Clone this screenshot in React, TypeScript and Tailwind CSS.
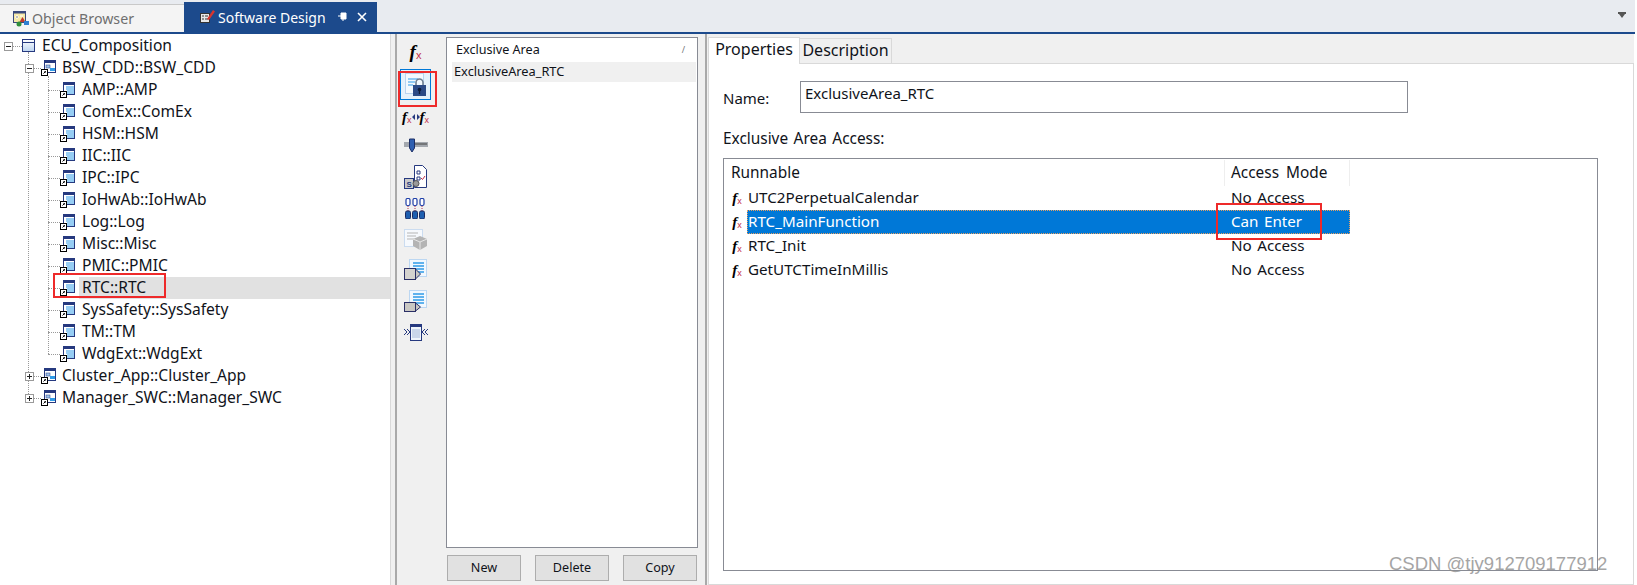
const FONT = "font-['Noto_Sans',sans-serif]";

const treeItems = [
  "AMP::AMP",
  "ComEx::ComEx",
  "HSM::HSM",
  "IIC::IIC",
  "IPC::IPC",
  "IoHwAb::IoHwAb",
  "Log::Log",
  "Misc::Misc",
  "PMIC::PMIC",
  "RTC::RTC",
  "SysSafety::SysSafety",
  "TM::TM",
  "WdgExt::WdgExt",
];

const runnables = [
  { name: "UTC2PerpetualCalendar", mode: "No Access" },
  { name: "RTC_MainFunction", mode: "Can Enter", selected: true },
  { name: "RTC_Init", mode: "No Access" },
  { name: "GetUTCTimeInMillis", mode: "No Access" },
];

function Expander({ open }: { open: boolean }) {
  return (
    <svg width="9" height="9" viewBox="0 0 9 9" className="shrink-0">
      <rect x="0.5" y="0.5" width="8" height="8" fill="#fff" stroke="#9a9a9a" />
      <path d={open ? "M2 4.5h5" : "M2 4.5h5M4.5 2v5"} stroke="#222" />
    </svg>
  );
}

function Shortcut() {
  return (
    <g>
      <rect x="0.5" y="9.5" width="6" height="6" fill="#fff" stroke="#000" />
      <path d="M2.5 13.5l2-2M3.5 11.5h1v1" stroke="#000" fill="none" />
    </g>
  );
}

function ComponentIcon() {
  return (
    <svg width="16" height="16" viewBox="0 0 16 16" className="shrink-0">
      <rect x="3.5" y="0.5" width="11" height="12" fill="#fff" stroke="#26397f" />
      <rect x="3" y="0" width="12" height="3" fill="#26397f" />
      <path d="M6 5h8M6 7h8M7 9h7M7 11h7" stroke="#2f9be8" />
      <Shortcut />
    </svg>
  );
}

function CompositionIcon() {
  return (
    <svg width="16" height="16" viewBox="0 0 16 16" className="shrink-0">
      <rect x="3.5" y="0.5" width="11" height="12" fill="#fff" stroke="#26397f" />
      <rect x="3" y="0" width="12" height="3" fill="#26397f" />
      <rect x="5" y="5" width="4" height="3" fill="#9ec3ea" stroke="#26397f" strokeWidth="0.5" />
      <rect x="9" y="8" width="5" height="3" fill="#2f9be8" />
      <Shortcut />
    </svg>
  );
}

function RootIcon() {
  return (
    <svg width="14" height="14" viewBox="0 0 14 14" className="shrink-0">
      <defs>
        <linearGradient id="rootFill" x1="0" y1="0" x2="0" y2="1">
          <stop offset="0" stopColor="#ffffff" />
          <stop offset="1" stopColor="#bcd4f0" />
        </linearGradient>
      </defs>
      <rect x="0.5" y="0.5" width="12" height="12" fill="url(#rootFill)" stroke="#26397f" />
      <path d="M1 3.5h11" stroke="#26397f" />
    </svg>
  );
}

function Fx({ small }: { small?: boolean }) {
  return (
    <span className="inline-flex items-end leading-none">
      <span className={`font-['Liberation_Serif',serif] font-bold italic ${small ? "text-[15px]" : "text-[19px]"} text-black`}>f</span>
      <span className={`font-['Liberation_Sans',sans-serif] ${small ? "text-[9px]" : "text-[11px]"} text-[#c0304a]`}>x</span>
    </span>
  );
}

function ToolIcon({ kind }: { kind: number }) {
  if (kind === 1) {
    return (
      <svg width="22" height="24" viewBox="0 0 22 24">
        <rect x="0.5" y="0.5" width="18" height="20" fill="#f4f9fe" stroke="#b9d3ef" />
        <path d="M3 6h10M3 9h7M3 12h5" stroke="#2f9be8" />
        <path d="M11 13V9.5a3.5 3.5 0 0 1 7 0V13" fill="none" stroke="#6f7f92" strokeWidth="1.6" />
        <rect x="8" y="12" width="13" height="11" fill="#2c4a86" />
        <circle cx="14.5" cy="16.5" r="1.8" fill="#0d1b3a" />
        <rect x="13.8" y="17" width="1.4" height="4" fill="#0d1b3a" />
      </svg>
    );
  }
  if (kind === 3) {
    return (
      <svg width="24" height="16" viewBox="0 0 24 16">
        <rect x="0" y="4" width="24" height="5" fill="#a4a8ae" />
        <path d="M9 6h14" stroke="#444" />
        <path d="M5.5 1h5v9l-2.5 4-2.5-4z" fill="#2f5fb0" stroke="#1d2f66" />
      </svg>
    );
  }
  if (kind === 4) {
    return (
      <svg width="24" height="24" viewBox="0 0 24 24">
        <path d="M10.5.5h8l4 4v18h-12z" fill="#fff" stroke="#26397f" />
        <path d="M13 6h3v3h-3zM13 12h3v3h-3z" fill="none" stroke="#26397f" />
        <path d="M17 13l1.5 1.5L21 11" stroke="#c0304a" fill="none" />
        <rect x="0.5" y="13.5" width="9" height="10" fill="#c9c9c9" stroke="#26397f" />
        <text x="2.5" y="22" fontSize="8" fontWeight="700" fill="#26397f" fontFamily="Liberation Sans">S</text>
        <circle cx="12" cy="18.5" r="3" fill="#9a9a9a" stroke="#555" />
      </svg>
    );
  }
  if (kind === 5) {
    return (
      <svg width="21" height="21" viewBox="0 0 21 21">
        {[0, 7, 14].map((x) => (
          <g key={x}>
            <rect x={x + 1} y="0.5" width="4" height="7" rx="1.5" fill="#fff" stroke="#1f3fa8" strokeWidth="1.2" />
            <path d={`M${x + 3} 8v5`} stroke="#b03050" strokeDasharray="1 1" />
            <rect x={x + 0.5} y="13" width="5" height="8" rx="1.5" fill="#1f5fb0" stroke="#1c2a60" />
          </g>
        ))}
      </svg>
    );
  }
  if (kind === 6) {
    return (
      <svg width="24" height="21" viewBox="0 0 24 21">
        <rect x="0.5" y="0.5" width="18" height="17" fill="#f6f9fd" stroke="#cbdcf0" />
        <path d="M3 4h11M3 7h9M3 10h7" stroke="#b5b5b5" />
        <path d="M9 10l7-3 7 3v7l-7 4-7-4z" fill="#b4b4b4" />
        <path d="M9 10l7 3 7-3M16 13v8" stroke="#e6e6e6" fill="none" />
      </svg>
    );
  }
  if (kind === 7 || kind === 8) {
    const top = kind === 7;
    return (
      <svg width="24" height="22" viewBox="0 0 24 22">
        <rect x="5.5" y="0.5" width="17" height="17" fill="#f2f8fe" stroke="#bcd7f2" />
        <path d="M9 4h11M9 7h11M9 10h11M12 13h8" stroke="#2f9be8" strokeWidth="1.4" />
        <rect x="0.5" y={top ? 9.5 : 12.5} width="11" height={top ? 11 : 9} fill={top ? "#d5d3cf" : "#c9c7c3"} stroke="#2a2f66" />
        <path d={`M11.5 ${top ? 10 : 13}l5 ${top ? 5 : 4}-5 ${top ? 5 : 4}z`} fill="#c9c7c3" stroke="#2a2f66" />
      </svg>
    );
  }
  return (
    <svg width="24" height="17" viewBox="0 0 24 17">
      <rect x="6.5" y="0.5" width="11" height="16" fill="#eef4fb" stroke="#26397f" />
      <rect x="6" y="0" width="12" height="3" fill="#26397f" />
      <rect x="8" y="5" width="8" height="9" fill="#c9d6ea" />
      <path d="M0 5l3 3-3 3M3 5l3 3-3 3M24 5l-3 3 3 3M21 5l-3 3 3 3" fill="none" stroke="#26397f" />
    </svg>
  );
}

function TreeRow({
  indent,
  label,
  icon,
  expander,
  selected,
}: {
  indent: number;
  label: string;
  icon: React.ReactNode;
  expander?: boolean;
  selected?: boolean;
}) {
  return (
    <div className="relative flex h-[22px] items-center" style={{ paddingLeft: indent }}>
      {/* tronco horizontal punteado */}
      <div
        className="absolute top-[11px] h-0 border-t border-dotted border-[#999]"
        style={{ left: indent - 12, width: 12 }}
      />
      {expander !== undefined && (
        <div className="absolute top-[7px] z-10 flex" style={{ left: indent - 16 }}>
          <Expander open={expander} />
        </div>
      )}
      {icon}
      <span
        className={`ml-[3px] flex h-[22px] flex-1 items-center pb-[1px] text-[15.6px] text-[#10131a] ${
          indent === 41 ? "pl-[2px]" : "pl-[3px]"
        } ${selected ? "bg-[#e1e1e1]" : ""}`}
      >
        {label}
      </span>
      {selected && (
        <div className="absolute left-[53px] top-[-4px] h-[25px] w-[113px] border-2 border-[#ee2a2a]" />
      )}
    </div>
  );
}

function TreePanel() {
  return (
    <div className="relative w-[391px] shrink-0 border-r border-[#d9d9d9] bg-white pt-px">
      <div className="absolute left-[28px] top-[18px] h-[346px] border-l border-dotted border-[#999]" />
      <div className="absolute left-[48px] top-[42px] h-[278px] border-l border-dotted border-[#999]" />
      <div className="relative flex h-[22px] items-center pl-[22px]">
        <div className="absolute left-[4px] top-[7px] flex">
          <Expander open />
        </div>
        <div className="absolute left-[13px] top-[11px] w-[9px] border-t border-dotted border-[#999]" />
        <RootIcon />
        <span className="ml-[6px] pb-[1px] text-[15.6px] text-[#10131a]">ECU_Composition</span>
      </div>
      <TreeRow indent={41} label="BSW_CDD::BSW_CDD" icon={<CompositionIcon />} expander />
      {treeItems.map((item) => (
        <TreeRow key={item} indent={60} label={item} icon={<ComponentIcon />} selected={item === "RTC::RTC"} />
      ))}
      <TreeRow indent={41} label="Cluster_App::Cluster_App" icon={<CompositionIcon />} expander={false} />
      <TreeRow indent={41} label="Manager_SWC::Manager_SWC" icon={<CompositionIcon />} expander={false} />
    </div>
  );
}

function Toolbar() {
  return (
    <div className="flex w-[51px] shrink-0 flex-col items-center border-l-2 border-[#a9a9a9] pr-[12px] pt-[4px]">
      <div className="flex h-[27px] items-center justify-center">
        <Fx />
      </div>
      <div className="relative mt-[4px] flex h-[31px] w-[31px] items-center justify-center border border-[#0078d7] bg-[#e5f1fb]">
        <ToolIcon kind={1} />
        <div className="absolute left-[-3px] top-[1px] h-[36px] w-[39px] border-2 border-[#ee2a2a]" />
      </div>
      <div className="mt-[4px] flex h-[26px] items-center justify-center">
        <Fx small />
        <svg width="8" height="6" viewBox="0 0 8 6">
          <path d="M3 0v6L0 3zM5 0v6l3-3z" fill="#26397f" />
        </svg>
        <Fx small />
      </div>
      <div className="mt-[6px] flex h-[20px] items-center">
        <ToolIcon kind={3} />
      </div>
      {[4, 5, 6, 7, 8, 9].map((kind) => (
        <div key={kind} className={`flex items-center justify-center ${kind === 4 ? "mt-[7px] h-[28px]" : "mt-[3px] h-[28px]"}`}>
          <ToolIcon kind={kind} />
        </div>
      ))}
    </div>
  );
}

function ListPanel() {
  const buttons = ["New", "Delete", "Copy"];
  return (
    <div className="flex w-[259px] shrink-0 flex-col pb-[4px] pt-[3px]">
      <div className="flex h-[511px] w-[252px] flex-col border border-[#888b94] bg-white">
        <div className="flex h-[24px] items-center justify-between pl-[9px] pr-[12px] text-[12.6px] text-[#10131a]">
          <span>Exclusive Area</span>
          <span className="text-[9px] text-[#777]">/</span>
        </div>
        <div className="ml-[5px] mr-px flex h-[20px] items-center bg-[#f0f0f0] pl-[2px] text-[12.8px] text-[#10131a]">
          ExclusiveArea_RTC
        </div>
      </div>
      <div className="mt-[7px] flex w-[252px] justify-between pl-px pr-px">
        {buttons.map((b) => (
          <button
            key={b}
            className="flex h-[26px] w-[74px] items-center justify-center border border-[#adadad] bg-[#e1e1e1] text-[12.6px] text-[#10131a]"
          >
            {b}
          </button>
        ))}
      </div>
    </div>
  );
}

function PropertiesPanel() {
  return (
    <div className="flex flex-1 flex-col border-l-2 border-[#a9a9a9] pl-px pt-[3px]">
      <div className="flex h-[26px] items-end text-[16px]">
        <div className="z-10 mb-[-1px] flex h-[27px] w-[92px] items-center justify-center border border-b-0 border-[#d9d9d9] bg-white pb-[4px] text-[#10131a]">
          Properties
        </div>
        <div className="flex h-[25px] w-[92px] items-center justify-center border border-l-0 border-b-0 border-[#d9d9d9] bg-[#f0f0f0] pb-[3px] text-[#10131a]">
          Description
        </div>
      </div>
      <div className="flex flex-1 flex-col border border-[#d9d9d9] bg-white pl-[14px] pt-[17px]">
        <div className="flex h-[32px] items-start">
          <span className="mt-[7px] w-[77px] text-[15px] leading-[20px] text-[#10131a]">Name:</span>
          <div className="h-[32px] w-[608px] border border-[#888b94] px-[4px] text-[15px] leading-[22px] text-[#10131a]">
            ExclusiveArea_RTC
          </div>
        </div>
        <div className="mt-[16px] h-[20px] text-[15.4px] leading-[20px] text-[#10131a] [word-spacing:1.5px]">
          Exclusive Area Access:
        </div>
        <div className="mt-[9px] h-[413px] w-[875px] border border-[#888b94] px-[1px] pt-[1px]">
          <div className="flex h-[26px] w-[625px] text-[15.4px] text-[#10131a]">
            <div className="flex w-[499px] items-center pl-[6px]">Runnable</div>
            <div className="flex w-[126px] items-center border-x border-[#eeeeee] pl-[6px] [word-spacing:3px]">
              Access Mode
            </div>
          </div>
          {runnables.map((r) => (
            <div key={r.name} className="flex h-[24px] w-[625px] items-center text-[15.2px]">
              <span className="flex w-[22px] justify-center pl-[2px]">
                <Fx small />
              </span>
              <div
                className={`flex h-[24px] flex-1 items-center pl-[1px] ${
                  r.selected
                    ? "bg-[#0078d7] text-white outline outline-1 -outline-offset-1 outline-dotted outline-[#e8a060]"
                    : "text-[#10131a]"
                }`}
              >
                <span className="flex-1 pb-[1px]">{r.name}</span>
                <span className="relative w-[119px] pb-[1px] [word-spacing:1.5px]">
                  {r.mode}
                  {r.selected && (
                    <span className="absolute left-[-15px] top-[-7px] h-[37px] w-[106px] border-2 border-[#ee2a2a]" />
                  )}
                </span>
              </div>
            </div>
          ))}
        </div>
      </div>
    </div>
  );
}

export default function App() {
  return (
    <div className={`relative flex h-[585px] w-[1637px] flex-col overflow-hidden bg-white ${FONT}`}>
      {/* Barra de pestañas */}
      <div className="flex h-[34px] w-[1635px] shrink-0 items-end border-b-2 border-[#1c4a8c] bg-[#e8ebf0]">
        <div className="flex h-[28px] w-[184px] items-center gap-[3px] whitespace-nowrap border-t border-[#c9c9c9] bg-[#f4f4f4] pl-[13px] text-[14.2px] text-[#6f6f6f]">
          <svg width="16" height="16" viewBox="0 0 16 16">
            <rect x="0.5" y="0.5" width="12" height="11" fill="#f6e9a8" stroke="#3a4a7c" />
            <rect x="0" y="0" width="13" height="2.5" fill="#3a4a7c" />
            <path d="M3 5h2v2H3zM7 5h3" stroke="#fff" />
            <path d="M9.5 6l3 5h-6z" fill="#c0392b" />
            <rect x="11" y="10" width="5" height="4" fill="#2f7fd0" />
            <circle cx="6" cy="13" r="2.5" fill="#2f8f3a" />
          </svg>
          Object Browser
        </div>
        <div className="flex h-[30px] w-[193px] items-center whitespace-nowrap bg-[#1c4a8c] pl-[16px] text-[14px] text-white">
          <svg width="16" height="16" viewBox="0 0 16 16" className="mr-[2px]">
            <rect x="0.5" y="4.5" width="9" height="9" fill="#e8e8e8" stroke="#333" />
            <path d="M2 7h2M5 7h3M2 10h2M5 10h3" stroke="#333" />
            <path d="M7 10l6-9 2 1.5-6 8.5z" fill="#d8352e" />
          </svg>
          Software Design
          <svg width="10" height="10" viewBox="0 0 10 10" className="ml-[12px]">
            <path d="M3 1h5v6H3zM0 4h3M5 7v2" stroke="#fff" fill="#fff" />
          </svg>
          <svg width="10" height="10" viewBox="0 0 10 10" className="ml-[9px]">
            <path d="M1 1l8 8M9 1l-8 8" stroke="#fff" strokeWidth="1.6" />
          </svg>
        </div>
        <div className="flex-1" />
        <svg width="8" height="6" viewBox="0 0 8 6" className="mb-[14px] mr-[9px]">
          <path d="M0 0h8v2H7L4 6 1 2H0z" fill="#555" />
        </svg>
      </div>

      {/* Cuerpo */}
      <div className="flex w-[1634px] flex-1 bg-[#f0f0f0]">
        <TreePanel />
        <div className="w-[4px] shrink-0" />
        <Toolbar />
        <ListPanel />
        <PropertiesPanel />
      </div>

      <div className="absolute left-[1389px] top-[552px] font-['Liberation_Sans',sans-serif] text-[18.5px] leading-[24px] text-[#8f8f8f] opacity-80">
        CSDN @tjy912709177912
      </div>
    </div>
  );
}
